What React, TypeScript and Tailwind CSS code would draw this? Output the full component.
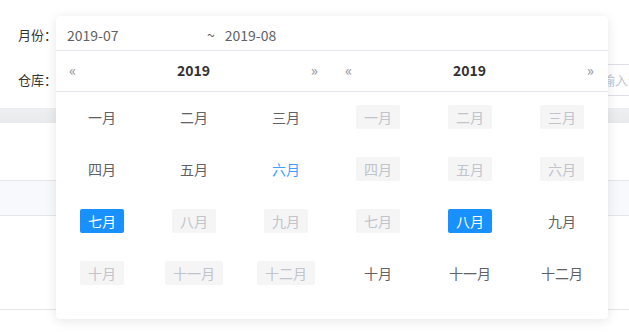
import React from 'react';

type Cell = { label: string; state: 'normal' | 'today' | 'active' | 'disabled' };

const months = ['一月', '二月', '三月', '四月', '五月', '六月', '七月', '八月', '九月', '十月', '十一月', '十二月'];

const leftPanel: Cell[] = months.map((m, i) => ({
  label: m,
  state: i === 6 ? 'active' : i === 5 ? 'today' : i > 6 ? 'disabled' : 'normal',
}));

const rightPanel: Cell[] = months.map((m, i) => ({
  label: m,
  state: i === 7 ? 'active' : i < 7 ? 'disabled' : 'normal',
}));

const cellClass: Record<Cell['state'], string> = {
  normal: 'text-[#606266]',
  today: 'text-[#409eff]',
  active: 'bg-[#1890ff] text-white',
  disabled: 'bg-[#f5f5f5] text-[#c0c4cc]',
};

const MonthPanel = ({ cells }: { cells: Cell[] }) => (
  <div className="w-[276px]">
    <div className="grid grid-cols-3">
      {cells.map((c) => (
        <div key={c.label} className="h-[52px] flex items-center justify-center">
          <span className={`h-6 px-2 rounded-[2px] text-[14px] leading-6 ${cellClass[c.state]}`}>{c.label}</span>
        </div>
      ))}
    </div>
  </div>
);

const PanelHeader = () => (
  <div className="w-[276px] h-10 flex items-center justify-between pl-[13px] pr-[14px] pb-[2px] text-[#909399]">
    <span className="text-[15px]">«</span>
    <span className="text-[14px] font-bold text-[#303133]">2019</span>
    <span className="text-[15px]">»</span>
  </div>
);

export default function App() {
  return (
    <div
      className="relative w-[629px] h-[336px] overflow-hidden bg-white"
      style={{ fontFamily: '"Noto Sans CJK SC", "Noto Sans", sans-serif' }}
    >
      {/* 查询表单 */}
      <div className="pt-[20px] pl-[18px] text-[13px] text-[#333]">
        <div className="h-[30px] flex items-center">
          <span>月份：</span>
        </div>
        <div className="h-[32px] mt-[14px] flex items-center justify-between">
          <span>仓库：</span>
          <div className="w-[54px] h-[32px] border border-[#dcdfe6] border-r-0 flex items-center pl-[13px] text-[#c0c4cc] whitespace-nowrap overflow-hidden">
            请输入仓库
          </div>
        </div>
      </div>

      {/* 表格 */}
      <div className="mt-[12px]">
        <div className="h-[15px] bg-gradient-to-b from-[#eeeff1] to-[#e9eaec]" />
        <div className="h-[57px]" />
        <div className="h-[36px] border-y border-[#e6e6e6] bg-[#f8f9fc]" />
        <div className="h-[94px] border-b border-[#e6e6e6]" />
      </div>

      {/* 月份范围弹层 */}
      <div className="absolute left-[56px] top-[16px] w-[552px] h-[303px] bg-white rounded-[4px] shadow-[0_2px_12px_0_rgba(0,0,0,0.1)]">
        <div className="h-[35px] border-b border-[#e4e7ed] flex items-center pl-[11px] pt-[4px] text-[14px] text-[#606266]">
          <span className="w-[140px]">2019-07</span>
          <span className="text-[#606266]">~</span>
          <span className="ml-[10px]">2019-08</span>
        </div>
        <div className="flex border-b border-[#e4e7ed]">
          <PanelHeader />
          <PanelHeader />
        </div>
        <div className="flex -mt-[1px]">
          <MonthPanel cells={leftPanel} />
          <MonthPanel cells={rightPanel} />
        </div>
      </div>
    </div>
  );
}
